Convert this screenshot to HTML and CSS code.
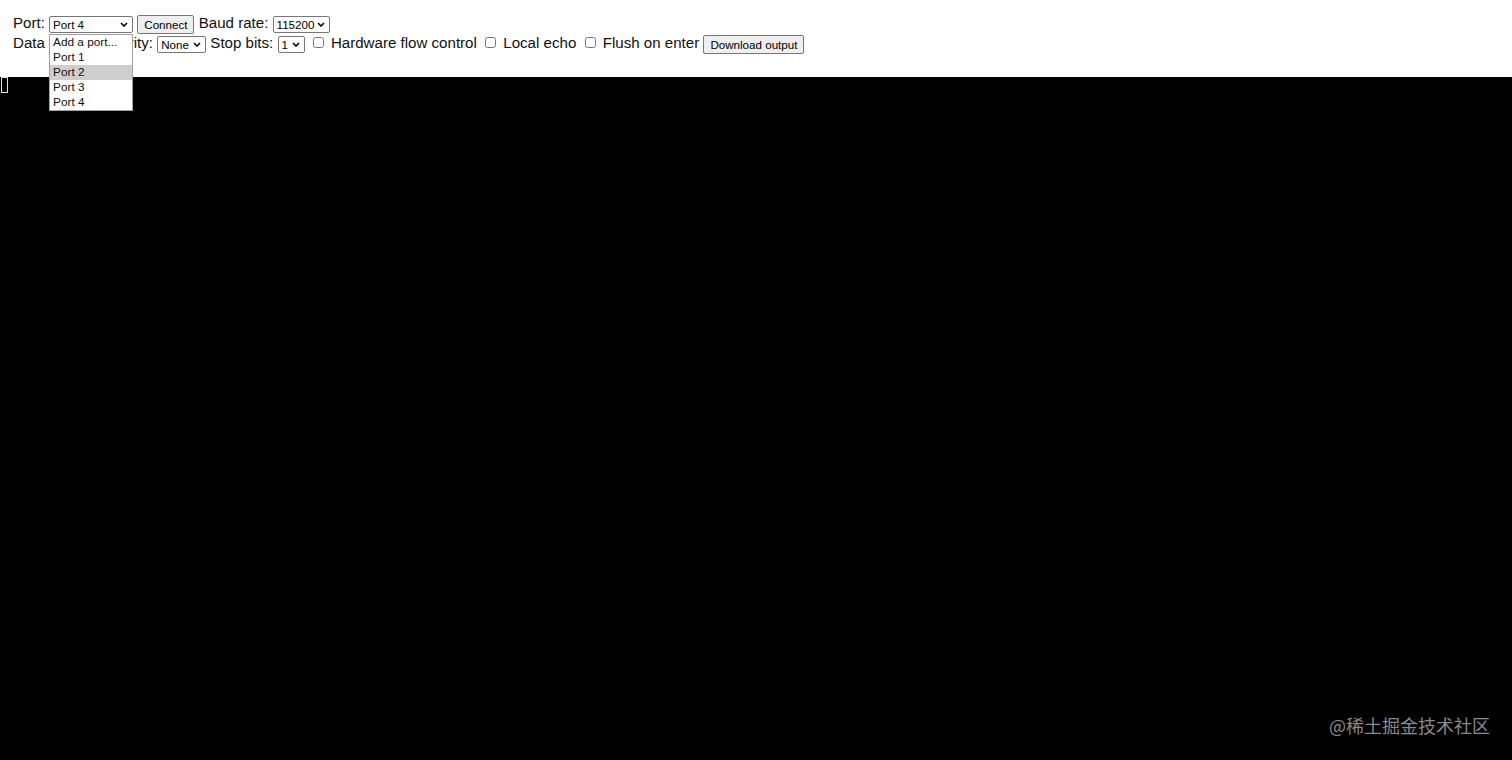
FILE: index.html
```html
<!DOCTYPE html>
<html lang="en">
<head>
    <meta charset="UTF-8">
    <meta name="viewport" content="width=device-width, initial-scale=1.0">
    <title>Serial Terminal</title>
    <link rel="stylesheet" href="styles.css">
</head>
<body>
    <div class="header">
        <div class="row">
            <label>Port:</label>
            <span class="port-wrap"><select id="ports" class="port-select">
                    <option>Add a port...</option>
                    <option>Port 1</option>
                    <option>Port 2</option>
                    <option>Port 3</option>
                    <option selected>Port 4</option>
                </select><!-- opened list of the port select --><ul class="port-list">
                    <li>Add a port...</li>
                    <li>Port 1</li>
                    <li class="hover">Port 2</li>
                    <li>Port 3</li>
                    <li>Port 4</li>
                </ul></span>
            <button id="connect">Connect</button>
            <label>Baud rate:</label>
            <select id="baudrate">
                <option>9600</option>
                <option selected>115200</option>
            </select>
        </div>
        <div class="row">
            <label>Data bits:</label>
            <select id="databits">
                <option>7</option>
                <option selected>8</option>
            </select>
            <label>Parity:</label>
            <select id="parity">
                <option selected>None</option>
                <option>Even</option>
                <option>Odd</option>
            </select>
            <label>Stop bits:</label>
            <select id="stopbits">
                <option selected>1</option>
                <option>2</option>
            </select>
            <input type="checkbox" id="rtscts">
            <label for="rtscts">Hardware flow control</label>
            <input type="checkbox" id="echo">
            <label for="echo">Local echo</label>
            <input type="checkbox" id="enterflush">
            <label for="enterflush">Flush on enter</label>
            <button id="download">Download output</button>
        </div>
    </div>
    <div class="terminal">
        <span class="cursor"></span>
        <div class="watermark">@稀土掘金技术社区</div>
    </div>
</body>
</html>
```

FILE: styles.css
```css
body {
    margin: 0;
    font-family: "Liberation Sans", Arial, sans-serif;
    font-size: 15.1px;
    height: 100vh;
    display: flex;
    flex-direction: column;
    overflow: hidden;
    color: #111;
}

.header {
    padding: 13px 13px 24px 13px;
    height: 40px;
}

.row {
    height: 20px;
    line-height: 20px;
    white-space: nowrap;
}

select, button {
    font-family: "Liberation Sans", Arial, sans-serif;
    font-size: 11.6px;
    color: black;
    margin: 0;
    vertical-align: middle;
    box-sizing: border-box;
}

select {
    -webkit-appearance: none;
    appearance: none;
    height: 17px;
    padding: 0 0 0 3px;
    border: 1px solid #767676;
    border-radius: 2px;
    background: white url("data:image/svg+xml,%3Csvg xmlns='http://www.w3.org/2000/svg' width='8' height='5'%3E%3Cpath d='M1 1l3 3 3-3' fill='none' stroke='%23000' stroke-width='1.6'/%3E%3C/svg%3E") no-repeat right 4px center;
}

button {
    height: 19px;
    padding: 0 6px;
    border: 1px solid #767676;
    border-radius: 2px;
    background: #efefef;
}

.port-select {
    width: 84px;
}

#baudrate {
    width: 57px;
}

#databits {
    width: 25px;
}

#parity {
    width: 49px;
}

#stopbits {
    width: 27px;
}

input[type="checkbox"] {
    width: 11px;
    height: 11px;
    margin: 0 3px 0 4px;
    vertical-align: middle;
    position: relative;
    top: -2px;
}

.port-wrap {
    position: relative;
    display: inline-block;
    vertical-align: middle;
    height: 17px;
}

.port-wrap select {
    vertical-align: top;
}

.port-list {
    position: absolute;
    top: 18px;
    left: 0;
    width: 82px;
    margin: 0;
    padding: 0;
    list-style: none;
    background: white;
    border: 1px solid #a0a0a0;
    font-size: 11.8px;
    line-height: 15px;
    z-index: 2;
}

.port-list li {
    height: 15px;
    padding-left: 3px;
}

.port-list li.hover {
    background: #cecece;
}

.terminal {
    flex: 1;
    background: black;
    position: relative;
}

.cursor {
    display: block;
    width: 5px;
    height: 14px;
    margin-left: 1px;
    border: 1px solid #e0e0e0;
}

.watermark {
    position: absolute;
    right: 22px;
    bottom: 22px;
    color: #8a8a8a;
    font-family: "Noto Sans CJK SC", sans-serif;
    font-size: 18px;
}
```
